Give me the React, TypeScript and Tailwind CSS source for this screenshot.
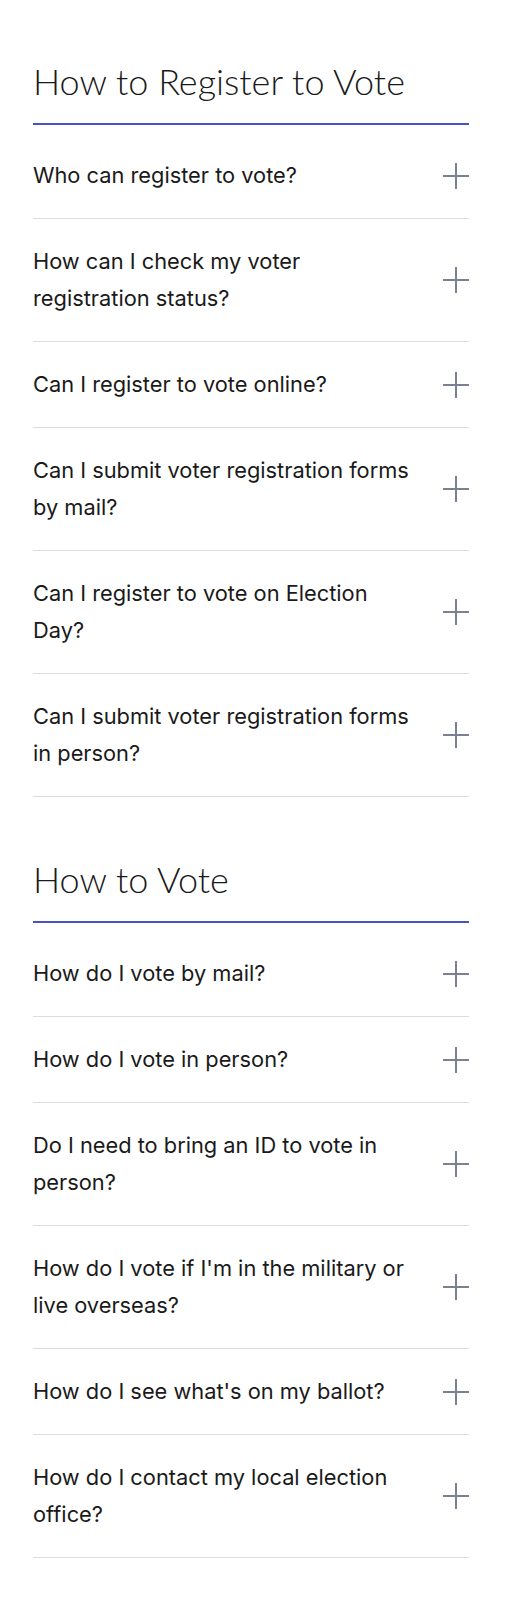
const SECTIONS = [
  {
    title: "How to Register to Vote",
    questions: [
      "Who can register to vote?",
      "How can I check my voter registration status?",
      "Can I register to vote online?",
      "Can I submit voter registration forms by mail?",
      "Can I register to vote on Election Day?",
      "Can I submit voter registration forms in person?",
    ],
  },
  {
    title: "How to Vote",
    questions: [
      "How do I vote by mail?",
      "How do I vote in person?",
      "Do I need to bring an ID to vote in person?",
      "How do I vote if I'm in the military or live overseas?",
      "How do I see what's on my ballot?",
      "How do I contact my local election office?",
    ],
  },
];

function PlusIcon() {
  return (
    <svg width="26" height="26" viewBox="0 0 26 26" className="shrink-0">
      <path d="M13 0v26M0 13h26" stroke="#7b8190" strokeWidth="2" fill="none" />
    </svg>
  );
}

export default function App() {
  return (
    <div className="min-h-[1600px] bg-white pl-[33px] pr-[40px] pt-[57px] text-[#1a1a1a]">
      {SECTIONS.map((s) => (
        <section key={s.title} className="mb-[58px]">
          <h2 className="border-b-2 border-[#4754c0] pb-[18px] font-['Lato',sans-serif] text-[36px] font-light leading-[48px] text-[#1a1a1a]">
            {s.title}
          </h2>
          <ul className="mt-[8px]">
            {s.questions.map((q) => (
              <li
                key={q}
                className="flex items-center justify-between gap-6 border-b border-[#dcdde1] py-[24px]"
              >
                <span className="max-w-[390px] font-['Inter',sans-serif] text-[21.8px] font-normal leading-[37px]">
                  {q}
                </span>
                <PlusIcon />
              </li>
            ))}
          </ul>
        </section>
      ))}
    </div>
  );
}
